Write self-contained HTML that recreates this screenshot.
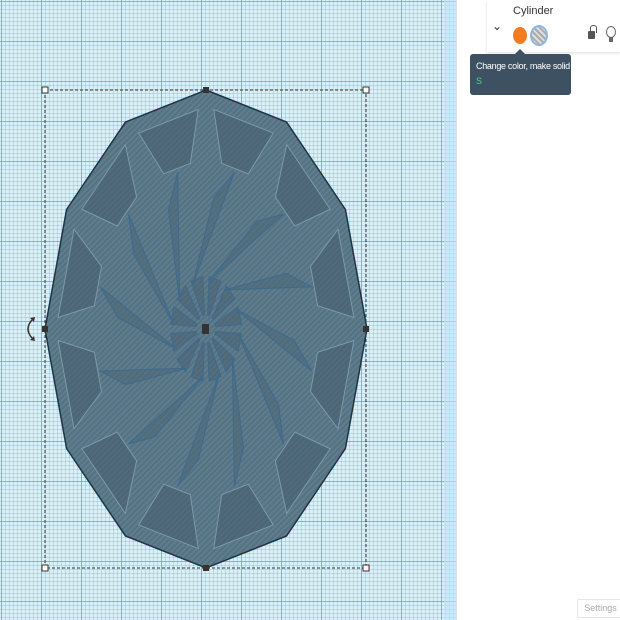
<!DOCTYPE html>
<html><head><meta charset="utf-8"><style>
html,body{margin:0;padding:0;width:620px;height:620px;overflow:hidden;font-family:"Liberation Sans",sans-serif;}
#grid{position:absolute;left:0;top:0;width:456px;height:620px;background-color:#d8f0fb;
background-image:
linear-gradient(90deg,rgba(60,170,220,.6) 1px,transparent 1px),
linear-gradient(0deg,rgba(60,170,220,.6) 1px,transparent 1px),
linear-gradient(90deg,rgba(120,205,240,.5) 1px,transparent 1px),
linear-gradient(0deg,rgba(120,205,240,.5) 1px,transparent 1px);
background-size:40px 40px,40px 40px,4px 4px,4px 4px;background-position:1px 2px,1px 2px,1px 2px,1px 2px;}
#panel{position:absolute;left:456px;top:0;width:164px;height:620px;background:#fff;border-left:1px solid #dde;}
#strip{position:absolute;left:444px;top:0;width:12px;height:620px;background:rgba(190,228,245,.6);}
#head{position:absolute;left:487px;top:0;width:133px;height:52px;background:#fff;box-shadow:0 1px 3px rgba(0,0,0,.15);}
</style></head><body>
<div id="grid"></div><div id="strip"></div>
<div id="panel"></div>
<div id="head"></div>
<div style="position:absolute;left:513px;top:5px;font-size:11px;color:#333">Cylinder</div>
<div style="position:absolute;left:492px;top:19px;font-size:12px;color:#333">&#8964;</div>
<div style="position:absolute;left:513px;top:27px;width:14px;height:17px;border-radius:50%;background:#f47c20"></div>
<div style="position:absolute;left:530px;top:25px;width:14px;height:17px;border-radius:50%;border:2px solid #8fb4e0;background:repeating-linear-gradient(45deg,#aaa 0 2px,#ddd 2px 4px)"></div>
<div style="position:absolute;left:588px;top:31px;width:7px;height:8px;background:#555;border-radius:1px"></div>
<div style="position:absolute;left:590px;top:25px;width:5px;height:7px;border:1.5px solid #555;border-bottom:none;border-radius:3px 3px 0 0"></div>
<div style="position:absolute;left:606px;top:26px;width:8px;height:10px;border-radius:50%;border:1.5px solid #666"></div>
<div style="position:absolute;left:609px;top:37px;width:4px;height:5px;background:#666"></div>
<div style="position:absolute;left:470px;top:54px;width:101px;height:41px;background:#3e5163;border-radius:3px;color:#fff;font-size:9px;letter-spacing:-0.3px;line-height:15px;padding:5px 0 0 6px;box-sizing:border-box;white-space:nowrap;overflow:hidden">Change color, make solid<br><span style="color:#4fd28a">S</span></div>
<div style="position:absolute;left:515px;top:49px;width:0;height:0;border:5px solid transparent;border-bottom-color:#3e5163;border-top:none"></div>
<div style="position:absolute;left:577px;top:599px;width:45px;height:17px;border:1px solid #e4e4e4;border-radius:2px;font-size:9px;color:#aaa;line-height:17px;text-align:center">Settings</div>
<svg id="s" width="456" height="620" style="position:absolute;left:0;top:0">
<defs><pattern id="h" width="4" height="4" patternUnits="userSpaceOnUse" patternTransform="rotate(45)"><rect width="4" height="4" fill="#5e7d90"/><rect width="2" height="4" fill="#56717f"/></pattern></defs>
<g id="g"></g>
<rect x="45" y="90" width="321" height="478" fill="none" stroke="#333" stroke-dasharray="3,2" stroke-width="1"/>
<g fill="#fff" stroke="#333"><rect x="42" y="87" width="6" height="6"/><rect x="363" y="87" width="6" height="6"/><rect x="42" y="565" width="6" height="6"/><rect x="363" y="565" width="6" height="6"/></g>
<g fill="#333"><rect x="203" y="87" width="6" height="6"/><rect x="203" y="565" width="6" height="6"/><rect x="42" y="326" width="6" height="6"/><rect x="363" y="326" width="6" height="6"/><rect x="202" y="324" width="7" height="10"/></g>
<path d="M32 320 Q24 329 32 338" fill="none" stroke="#333" stroke-width="1.5"/>
<path d="M30 318 l5 -1 -1 5 z M30 340 l5 1 -1 -5 z" fill="#333"/>
</svg>
<script>
var cx=206,cy=329,rx=161,ry=239,g=document.getElementById('g');
function P(a,r){a=a*Math.PI/180;return [cx+rx*r*Math.sin(a),cy-ry*r*Math.cos(a)];}
function poly(pts,f,st,op){var e=document.createElementNS('http://www.w3.org/2000/svg','polygon');e.setAttribute('points',pts.map(p=>p.join(',')).join(' '));e.setAttribute('fill',f);e.setAttribute('stroke',st||'none');if(op)e.setAttribute('fill-opacity',op);g.appendChild(e);}
var outer=[];for(var k=0;k<12;k++)outer.push(P(30*k,1));
poly(outer,'url(#h)','#1f3540');
g.lastChild.setAttribute('stroke-width','1.5');
for(var k=0;k<12;k++){var a=30*k;
poly([P(a+3,0.92),P(a+27,0.92),P(a+22,0.7),P(a+8,0.7)],'#3f5666','#7d98aa',0.45);
poly([P(a+15,0.68),P(a-25,0.2),P(a+5,0.55)],'#4a6373','#3d6a8e',0.45);
poly([P(a+5,0.22),P(a+10,0.06),P(a+20,0.06),P(a+25,0.22)],'#48606f','#3d6a8e',0.5);}
</script>
</body></html>
